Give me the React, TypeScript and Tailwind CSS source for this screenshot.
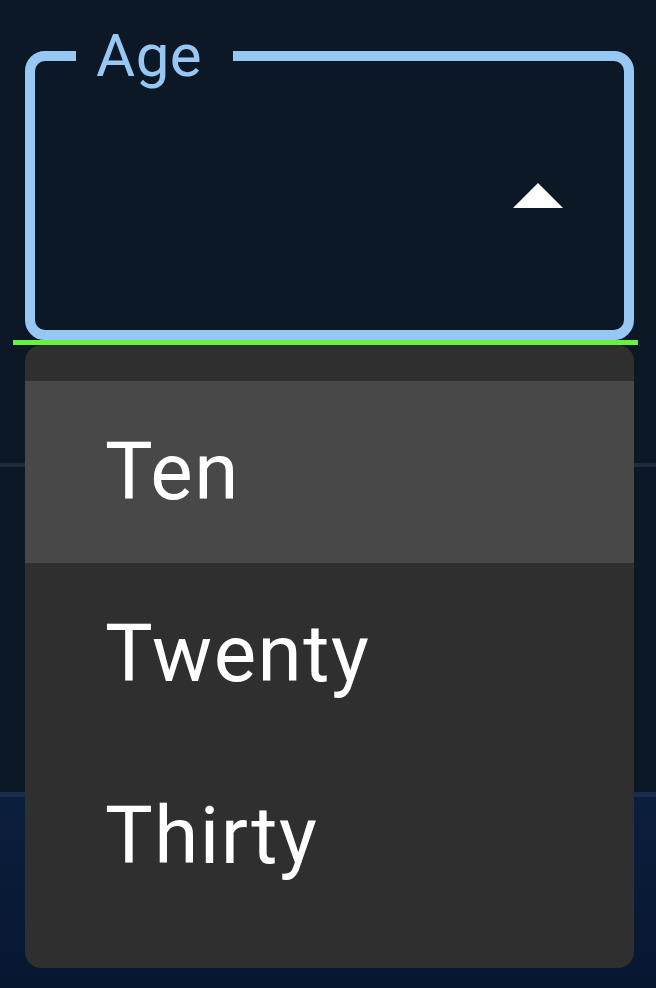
import React from "react";

export default function App() {
  const items = ["Ten", "Twenty", "Thirty"];
  return (
    <div
      className="relative w-[656px] h-[988px] overflow-hidden flex flex-col bg-[#0d1826]"
      style={{ fontFamily: "Roboto, 'Noto Sans', sans-serif" }}
    >
      {/* background bands */}
      <div className="h-[463px] shrink-0 bg-[#0d1826] pt-[51px] px-[22px] pl-[25px]">
        {/* outlined select */}
        <div className="relative w-[609px] h-[289px] rounded-[20px] border-[10px] border-[#97c8f4] bg-[#0d1826] flex items-center justify-end pr-[26px]">
          <span className="absolute left-[41px] top-[-35.5px] w-[157px] h-[60px] pl-[20px] bg-[#0d1826] text-[60px] leading-[60px] tracking-[0.5px] text-[#97c8f4] whitespace-nowrap">
            Age
          </span>
          <svg
            viewBox="0 0 24 24"
            className="w-[120px] h-[120px] mt-[5px]"
            fill="#ffffff"
          >
            <path d="m7 14 5-5 5 5z" />
          </svg>
        </div>
      </div>
      <div className="h-[4px] shrink-0 bg-[#1f2b3c]" />
      <div className="h-[325px] shrink-0 bg-[#0d1826]" />
      <div className="h-[5px] shrink-0 bg-[#1a2c4a]" />
      <div className="flex-1 bg-gradient-to-b from-[#0b1e3d] to-[#081730]" />

      {/* green focus line */}
      <div className="absolute left-[13px] top-[340px] w-[625px] h-[5px] bg-[#66f23f]" />

      {/* dropdown menu */}
      <div className="absolute left-[25px] top-[345px] w-[609px] h-[623px] rounded-[16px] bg-[#2f2f2f] pt-[36px] pb-[41px] flex flex-col">
        {items.map((t, i) => (
          <div
            key={t}
            className={
              i === 0
                ? "h-[182px] flex items-center pl-[80px] bg-[#484848] text-white text-[80px] leading-none tracking-[1.5px]"
                : "h-[182px] flex items-center pl-[80px] text-white text-[80px] leading-none tracking-[1.5px]"
            }
          >
            {t}
          </div>
        ))}
      </div>
    </div>
  );
}
